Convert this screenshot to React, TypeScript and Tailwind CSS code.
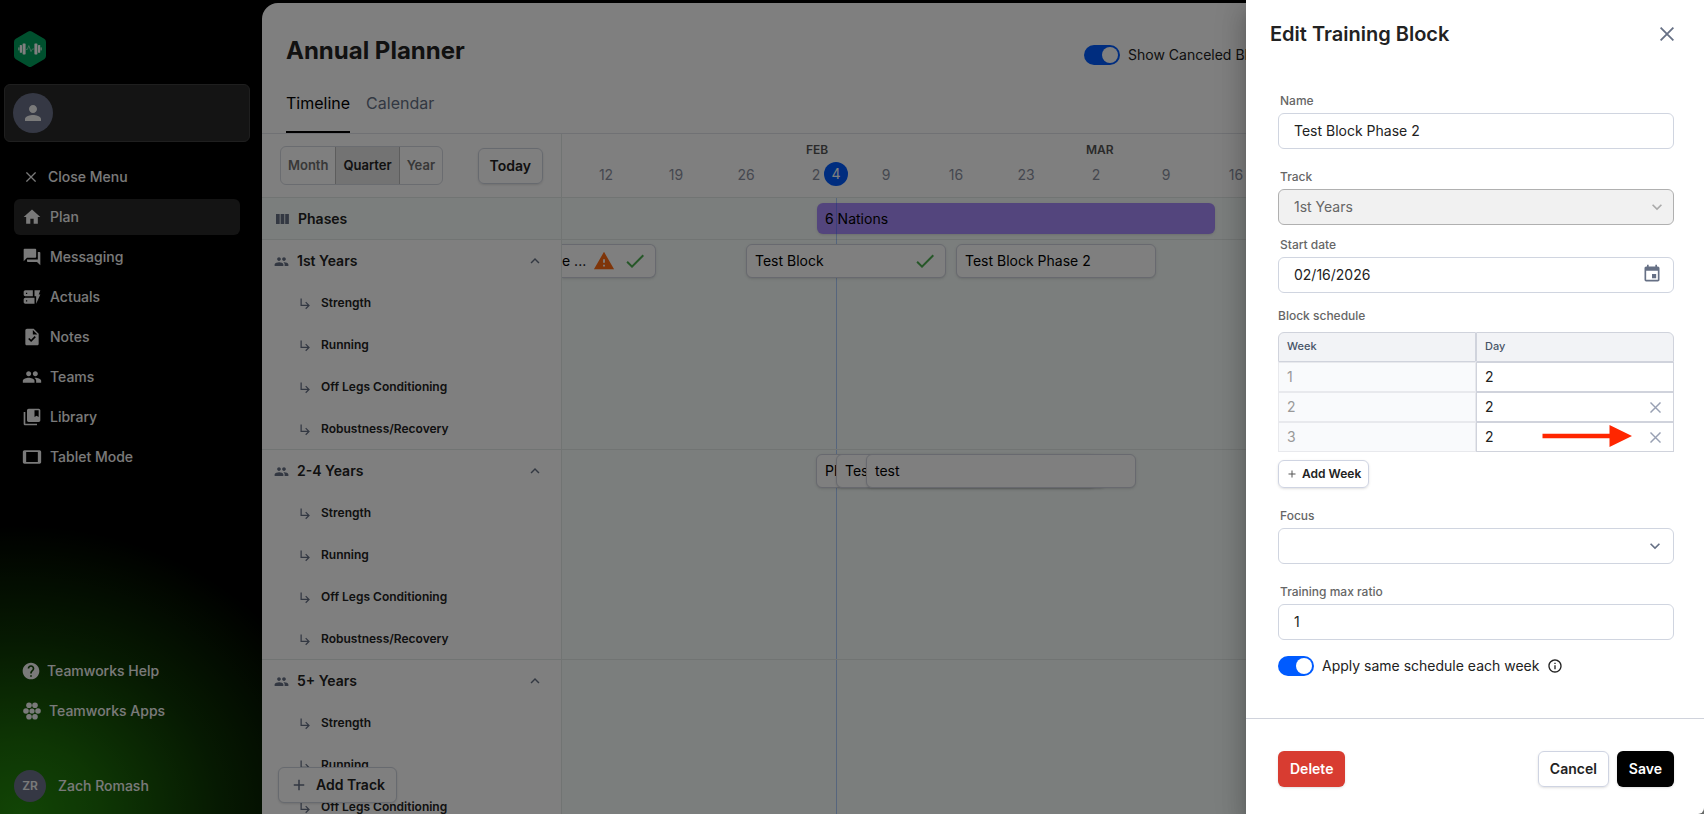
import { useState } from 'react'
import type { ReactNode } from 'react'
import type { IconType } from 'react-icons'
import {
  MdAdd,
  MdCheck,
  MdCollectionsBookmark,
  MdDynamicForm,
  MdEvent,
  MdExpandLess,
  MdExpandMore,
  MdForum,
  MdGroup,
  MdHelp,
  MdHome,
  MdInfoOutline,
  MdPerson,
  MdSubdirectoryArrowRight,
  MdTablet,
  MdTask,
  MdWarning,
} from 'react-icons/md'

interface Block {
  id: string
  label: string
  start: number
  days: number
  done?: boolean
}

interface Track {
  id: string
  name: string
  blocks: Block[]
}

// Days are counted from Monday, January 12
const DAY_WIDTH = 10
const ORIGIN = 44
const TODAY = 23

const dayToX = (day: number) => ORIGIN + day * DAY_WIDTH

const WEEKS = [12, 19, 26, 2, 9, 16, 23, 2, 9, 16]

const MONTHS = [
  { label: 'FEB', day: 20 },
  { label: 'MAR', day: 48 },
]

const DISCIPLINES = ['Strength', 'Running', 'Off Legs Conditioning', 'Robustness/Recovery']

const TRACKS: Track[] = [
  {
    id: 't1',
    name: '1st Years',
    blocks: [
      { id: 'b1', label: 'Test Block', start: 14, days: 20, done: true },
      { id: 'b2', label: 'Test Block Phase 2', start: 35, days: 20 },
    ],
  },
  {
    id: 't2',
    name: '2-4 Years',
    blocks: [
      { id: 'b3', label: 'Ph', start: 21, days: 28 },
      { id: 'b4', label: 'Test', start: 23, days: 27 },
      { id: 'b5', label: 'test', start: 26, days: 27 },
    ],
  },
  { id: 't3', name: '5+ Years', blocks: [] },
]

const NAV: { label: string; icon: IconType }[] = [
  { label: 'Plan', icon: MdHome },
  { label: 'Messaging', icon: MdForum },
  { label: 'Actuals', icon: MdDynamicForm },
  { label: 'Notes', icon: MdTask },
  { label: 'Teams', icon: MdGroup },
  { label: 'Library', icon: MdCollectionsBookmark },
  { label: 'Tablet Mode', icon: MdTablet },
]

function CrossIcon({ className }: { className?: string }) {
  return (
    <svg viewBox="0 0 14 14" fill="none" stroke="currentColor" strokeWidth="1.8" className={className}>
      <path d="M0.6 0.6 13.4 13.4M13.4 0.6 0.6 13.4" />
    </svg>
  )
}

function Logo() {
  return (
    <svg viewBox="0 0 32 36" className="h-9 w-8">
      <path
        d="M14.2 0.6a3.6 3.6 0 0 1 3.6 0L30.2 7.8A3.6 3.6 0 0 1 32 10.9v14.2a3.6 3.6 0 0 1-1.8 3.1L17.8 35.4a3.6 3.6 0 0 1-3.6 0L1.8 28.2A3.6 3.6 0 0 1 0 25.1V10.9A3.6 3.6 0 0 1 1.8 7.8Z"
        fill="#00a05c"
      />
      <g fill="#fff">
        <rect x="8.6" y="12.4" width="3" height="11" rx="0.6" />
        <rect x="5.8" y="14" width="2.2" height="7.8" rx="0.6" />
        <rect x="4.4" y="16.4" width="1" height="3" />
        <rect x="20.4" y="12.4" width="3" height="11" rx="0.6" />
        <rect x="24" y="14" width="2.2" height="7.8" rx="0.6" />
        <rect x="26.6" y="16.4" width="1" height="3" />
      </g>
      <path d="M12 18.4h1.4l1.4-3.8 2.2 6 1.4-2.6h1.6" fill="none" stroke="#8fdcb9" strokeWidth="0.9" />
    </svg>
  )
}

function AppsIcon() {
  return (
    <svg viewBox="0 0 18 18" fill="currentColor" className="size-[18px]">
      <circle cx="6" cy="3.3" r="2.8" />
      <circle cx="12" cy="3.3" r="2.8" />
      <circle cx="3" cy="9" r="2.8" />
      <circle cx="9" cy="9" r="2.6" />
      <circle cx="15" cy="9" r="2.8" />
      <circle cx="6" cy="14.7" r="2.8" />
      <circle cx="12" cy="14.7" r="2.8" />
    </svg>
  )
}

function Toggle({ id }: { id: string }) {
  const [on, setOn] = useState(true)
  return (
    <input
      id={id}
      type="checkbox"
      checked={on}
      onChange={e => setOn(e.target.checked)}
      className="flex h-5 w-9 shrink-0 appearance-none items-center rounded-full bg-gray-400 p-0.5 before:size-4 before:rounded-full before:bg-white checked:justify-end checked:bg-[#005bff]"
    />
  )
}

function Sidebar() {
  return (
    <nav className="flex w-[262px] shrink-0 flex-col text-sm font-medium text-[#f4f4f4]">
      <a href="#home" aria-label="Home" className="mt-[31px] ml-3.5 w-8">
        <Logo />
      </a>
      <button
        aria-label="Switch team"
        className="mt-[17px] ml-1 flex h-[58px] w-[246px] items-center rounded-md border border-[#3e3e3e] bg-[#282828] px-2"
      >
        <span className="flex size-10 items-center justify-center rounded-full bg-[#6a7088]">
          <MdPerson className="size-6" />
        </span>
      </button>
      <button className="mt-[17px] ml-3.5 flex h-9 w-[226px] items-center pl-3">
        <CrossIcon className="size-[10px]" />
        <span className="ml-3">Close Menu</span>
      </button>
      <ul className="mt-1 ml-3.5 flex w-[226px] flex-col gap-1">
        {NAV.map(({ label, icon: Icon }, i) => (
          <li key={label}>
            <a
              href={`#${label}`}
              className={`flex h-9 items-center gap-2 rounded-md pl-2 ${i === 0 ? 'bg-[#282828]' : ''}`}
            >
              <Icon className="size-5" />
              {label}
            </a>
          </li>
        ))}
      </ul>
      <div className="mt-auto mb-3 ml-3.5 flex w-[226px] flex-col gap-1">
        <a href="#help" className="flex h-9 items-center gap-1.5 pl-[7px]">
          <MdHelp className="size-5" />
          Teamworks Help
        </a>
        <a href="#apps" className="flex h-9 items-center gap-2 pl-[9px]">
          <AppsIcon />
          Teamworks Apps
        </a>
        <a href="#profile" className="mt-[37px] flex h-8 items-center gap-3">
          <span className="flex size-8 items-center justify-center rounded-full bg-[#6a7088] text-xs font-semibold">ZR</span>
          Zach Romash
        </a>
      </div>
    </nav>
  )
}

function BlockCard({ block }: { block: Block }) {
  return (
    <div
      className="absolute top-1 flex h-[34px] items-center justify-between rounded-md border border-[#d0d3de] bg-white px-2 text-sm whitespace-nowrap text-black shadow-sm"
      style={{ left: dayToX(block.start), width: block.days * DAY_WIDTH }}
    >
      {block.label}
      {block.done && <MdCheck className="size-6 text-[#4caf50]" />}
    </div>
  )
}

function TrackNames({ track }: { track: Track }) {
  return (
    <section className="h-[210px] overflow-hidden border-b border-[#e2e8e6]">
      <div className="flex h-[42px] items-center pr-[17px] pl-3">
        <MdGroup className="size-[15px] text-[#667085]" />
        <h2 className="ml-2 text-sm font-semibold">{track.name}</h2>
        <button aria-label={`Collapse ${track.name}`} className="ml-auto">
          <MdExpandLess className="size-[18px] text-[#667085]" />
        </button>
      </div>
      {DISCIPLINES.map(d => (
        <div key={d} className="flex h-[42px] items-center gap-2 pl-9 text-xs font-semibold">
          <MdSubdirectoryArrowRight className="size-[15px] text-[#667085]" />
          {d}
        </div>
      ))}
    </section>
  )
}

function Planner() {
  const [range, setRange] = useState('Quarter')

  return (
    <main className="relative mt-[3px] flex min-w-0 grow flex-col overflow-hidden rounded-tl-2xl bg-white text-[#222]">
      <header className="border-b border-[#e0e3e8]">
        <div className="flex h-[86px] items-center pt-2.5 pl-6">
          <h1 className="text-2xl font-bold">Annual Planner</h1>
          <div className="ml-auto flex w-[620px] shrink-0 items-center gap-2 pt-2">
            <Toggle id="show-canceled" />
            <label htmlFor="show-canceled" className="text-sm">Show Canceled Blocks</label>
          </div>
        </div>
        <div className="flex h-11 gap-4 pl-6 text-base">
          <button className="border-b-2 border-black pb-3.5 text-black">Timeline</button>
          <button className="border-b-2 border-transparent pb-3.5 text-[#667085]">Calendar</button>
        </div>
      </header>

      <div className="flex min-h-0 grow">
        <div className="w-[300px] shrink-0 border-r border-[#e2e8e6]">
          <div className="flex h-16 items-center justify-between border-b border-[#e2e8e6] px-[18px]">
            <div className="flex h-[39px] overflow-hidden rounded-md border border-[#d5d9e0] text-[13px] font-semibold">
              {['Month', 'Quarter', 'Year'].map(r => (
                <button
                  key={r}
                  onClick={() => setRange(r)}
                  className={r === range ? 'border-x border-[#bbb] bg-[#e6e6e6] px-[7px]' : 'px-[7px] text-[#707070]'}
                >
                  {r}
                </button>
              ))}
            </div>
            <button className="h-9 rounded-md border border-[#cfd4de] px-[11px] text-sm font-semibold shadow-sm">Today</button>
          </div>
          <div className="flex h-[42px] items-center border-b border-[#e2e8e6] bg-[#f6fcfa] pl-3.5">
            <svg viewBox="0 0 13 10" fill="#667085" className="h-[10px] w-[13px]">
              <rect width="3.7" height="10" />
              <rect x="4.6" width="3.7" height="10" />
              <rect x="9.2" width="3.7" height="10" />
            </svg>
            <h2 className="ml-[9px] text-sm font-semibold">Phases</h2>
          </div>
          {TRACKS.map(t => (
            <TrackNames key={t.id} track={t} />
          ))}
        </div>

        <div className="relative flex min-w-0 grow flex-col overflow-hidden bg-[#f6fcfa]">
          <div className="relative h-16 shrink-0 border-b border-[#e2e8e6] bg-white">
            {MONTHS.map(m => (
              <span
                key={m.label}
                className="absolute top-2 text-xs font-semibold text-[#555]"
                style={{ left: dayToX(m.day) }}
              >
                {m.label}
              </span>
            ))}
            <div className="flex pt-[31px] pl-[9px] text-sm text-[#8b90a0]">
              {WEEKS.map((w, i) => (
                <span key={i} className="w-[70px] shrink-0 text-center">{w}</span>
              ))}
            </div>
            <span
              className="absolute top-7 flex size-6 -translate-x-1/2 items-center justify-center rounded-full bg-[#005bff] text-sm text-white"
              style={{ left: dayToX(TODAY) }}
            >
              4
            </span>
          </div>

          <div className="relative grow">
            <div className="relative h-[42px] border-b border-[#e2e8e6]">
              <div
                className="absolute top-[5px] flex h-[31px] items-center rounded-md bg-[#a78bfa] px-2 text-sm text-black shadow-sm"
                style={{ left: dayToX(21) + 1, width: 40 * DAY_WIDTH - 2 }}
              >
                6 Nations
              </div>
            </div>
            <div className="absolute inset-y-0 w-px bg-[#005bff]/30" style={{ left: dayToX(TODAY) }} />
            {TRACKS.map((t, i) => (
              <div key={t.id} className="relative h-[210px] border-b border-[#e2e8e6]">
                {i === 0 && (
                  <div className="absolute top-1 left-0 flex h-[34px] w-[94px] items-center rounded-r-md border border-l-0 border-[#d0d3de] bg-white pr-2 text-sm text-black shadow-sm">
                    <span>e ...</span>
                    <MdWarning className="ml-auto size-[22px] text-[#ff6a13]" />
                    <MdCheck className="ml-2 size-6 text-[#4caf50]" />
                  </div>
                )}
                {t.blocks.map(b => (
                  <BlockCard key={b.id} block={b} />
                ))}
              </div>
            ))}
          </div>
        </div>
      </div>

      <button className="absolute bottom-[11px] left-4 flex h-9 items-center gap-2 rounded-md border border-[#cfd4de] bg-white px-[11px] text-sm font-semibold shadow-sm">
        <MdAdd className="size-[18px] text-[#667085]" />
        Add Track
      </button>
    </main>
  )
}

const inputClass = 'h-9 w-full rounded-md border border-[#d0d5e0] bg-white px-[15px] pb-0.5 text-sm text-[#222]'

function Field({ id, label, children }: { id: string; label: string; children: ReactNode }) {
  return (
    <div>
      <label htmlFor={id} className="mb-1 block pl-0.5 text-xs font-medium text-[#666]">{label}</label>
      <div className="relative">{children}</div>
    </div>
  )
}

function Schedule() {
  const [days, setDays] = useState(['2', '2', '2'])

  return (
    <div>
      <h3 className="mb-2 text-xs font-medium text-[#666]">Block schedule</h3>
      <div className="relative">
        <table className="w-full table-fixed border-separate border-spacing-0 text-left text-sm">
          <thead>
            <tr className="h-[30px] text-[11px] text-[#475467]">
              <th className="rounded-tl-md border border-[#d0d3dc] bg-[#f2f3f6] p-0 pl-2 font-medium">Week</th>
              <th className="rounded-tr-md border border-[#d0d3dc] bg-[#f2f3f6] p-0 pl-2 font-medium">Day</th>
            </tr>
          </thead>
          <tbody>
            {days.map((day, i) => (
              <tr key={i} className="h-[30px]">
                <td className="border border-[#e8e9ed] bg-[#f9fafc] p-0 pl-2 text-[#999]">{i + 1}</td>
                <td className="border border-[#d0d3dc] p-0">
                  <div className="flex items-center pr-3 pl-2">
                    <input
                      aria-label={`Day for week ${i + 1}`}
                      value={day}
                      onChange={e => setDays(days.map((d, j) => (j === i ? e.target.value : d)))}
                      className="w-full min-w-0 text-[#222]"
                    />
                    {i > 0 && (
                      <button aria-label={`Remove week ${i + 1}`} onClick={() => setDays(days.filter((_, j) => j !== i))}>
                        <CrossIcon className="size-[11px] text-[#98a0b3]" />
                      </button>
                    )}
                  </div>
                </td>
              </tr>
            ))}
          </tbody>
        </table>
        <svg viewBox="0 0 90 22" fill="#ff2600" className="pointer-events-none absolute right-[42px] bottom-[5px] h-[22px] w-[90px]">
          <path d="M0.5 8.700h67V0L90 11 67.5 22v-8.700H0.500Z" />
        </svg>
      </div>
      <button
        onClick={() => setDays([...days, '2'])}
        className="mt-2 flex h-7 items-center gap-1 rounded-md border border-[#cfd4e2] px-[7px] text-xs font-semibold text-[#222] shadow-sm"
      >
        <MdAdd className="size-3 text-[#555]" />
        Add Week
      </button>
    </div>
  )
}

function EditDrawer() {
  const [name, setName] = useState('Test Block Phase 2')
  const [date, setDate] = useState('02/16/2026')
  const [ratio, setRatio] = useState('1')

  return (
    <aside className="absolute inset-y-0 right-0 flex w-[458px] flex-col rounded-br-md bg-white shadow-[0_8px_10px_-5px_rgba(0,0,0,0.2),0_16px_24px_2px_rgba(0,0,0,0.14),0_6px_30px_5px_rgba(0,0,0,0.12)]">
      <div className="flex h-[67px] items-center justify-between pr-[30px] pl-6">
        <h2 className="text-xl font-semibold text-[#222]">Edit Training Block</h2>
        <button aria-label="Close">
          <CrossIcon className="size-3.5 text-[#667085]" />
        </button>
      </div>

      <form className="flex grow flex-col pt-[26px] pr-[30px] pl-8" onSubmit={e => e.preventDefault()}>
        <Field id="name" label="Name">
          <input id="name" value={name} onChange={e => setName(e.target.value)} className={inputClass} />
        </Field>
        <div className="mt-5">
          <Field id="track" label="Track">
            <select
              id="track"
              disabled
              className="h-9 w-full appearance-none rounded-md border border-[#b0b0b0] bg-[#f1f1f1] px-[15px] text-sm text-[#666] opacity-100"
            >
              <option>1st Years</option>
            </select>
            <MdExpandMore className="absolute top-2 right-[7px] size-5 text-[#aaa]" />
          </Field>
        </div>
        <div className="mt-3 mb-[15px]">
          <Field id="start" label="Start date">
            <input id="start" value={date} onChange={e => setDate(e.target.value)} className={inputClass} />
            <MdEvent className="absolute top-[7px] right-3 size-5 text-[#667085]" />
          </Field>
        </div>
        <Schedule />
        <div className="mt-5 flex flex-col gap-5">
          <Field id="focus" label="Focus">
            <select id="focus" className={`${inputClass} appearance-none`}>
              <option></option>
            </select>
            <MdExpandMore className="absolute top-2 right-[9px] size-5 text-[#667085]" />
          </Field>
          <Field id="ratio" label="Training max ratio">
            <input id="ratio" value={ratio} onChange={e => setRatio(e.target.value)} className={inputClass} />
          </Field>
        </div>
        <div className="mt-4 flex items-center gap-2 text-sm text-[#222]">
          <Toggle id="same-schedule" />
          <label htmlFor="same-schedule">Apply same schedule each week</label>
          <MdInfoOutline className="size-4" />
        </div>
      </form>

      <footer className="flex h-24 items-start gap-2 border-t border-[#d0d3dc] pt-8 pr-[30px] pl-8 text-sm font-semibold">
        <button className="mr-auto h-9 rounded-md bg-[#d83c31] px-3 text-white shadow-sm">Delete</button>
        <button className="h-9 rounded-md border border-[#cfd4e2] px-[11px] text-[#222] shadow-sm">Cancel</button>
        <button className="h-9 rounded-md bg-black px-3 text-white shadow-sm">Save</button>
      </footer>
    </aside>
  )
}

export default function App() {
  return (
    <div className="relative flex h-screen overflow-hidden bg-black bg-[radial-gradient(ellipse_330px_290px_at_20px_100%,#248a0c_0%,#1c6c09_25%,#0d3404_60%,#000_100%)] font-[Inter,sans-serif]">
      <Sidebar />
      <Planner />
      <div className="absolute inset-0 bg-black/50" />
      <EditDrawer />
    </div>
  )
}
